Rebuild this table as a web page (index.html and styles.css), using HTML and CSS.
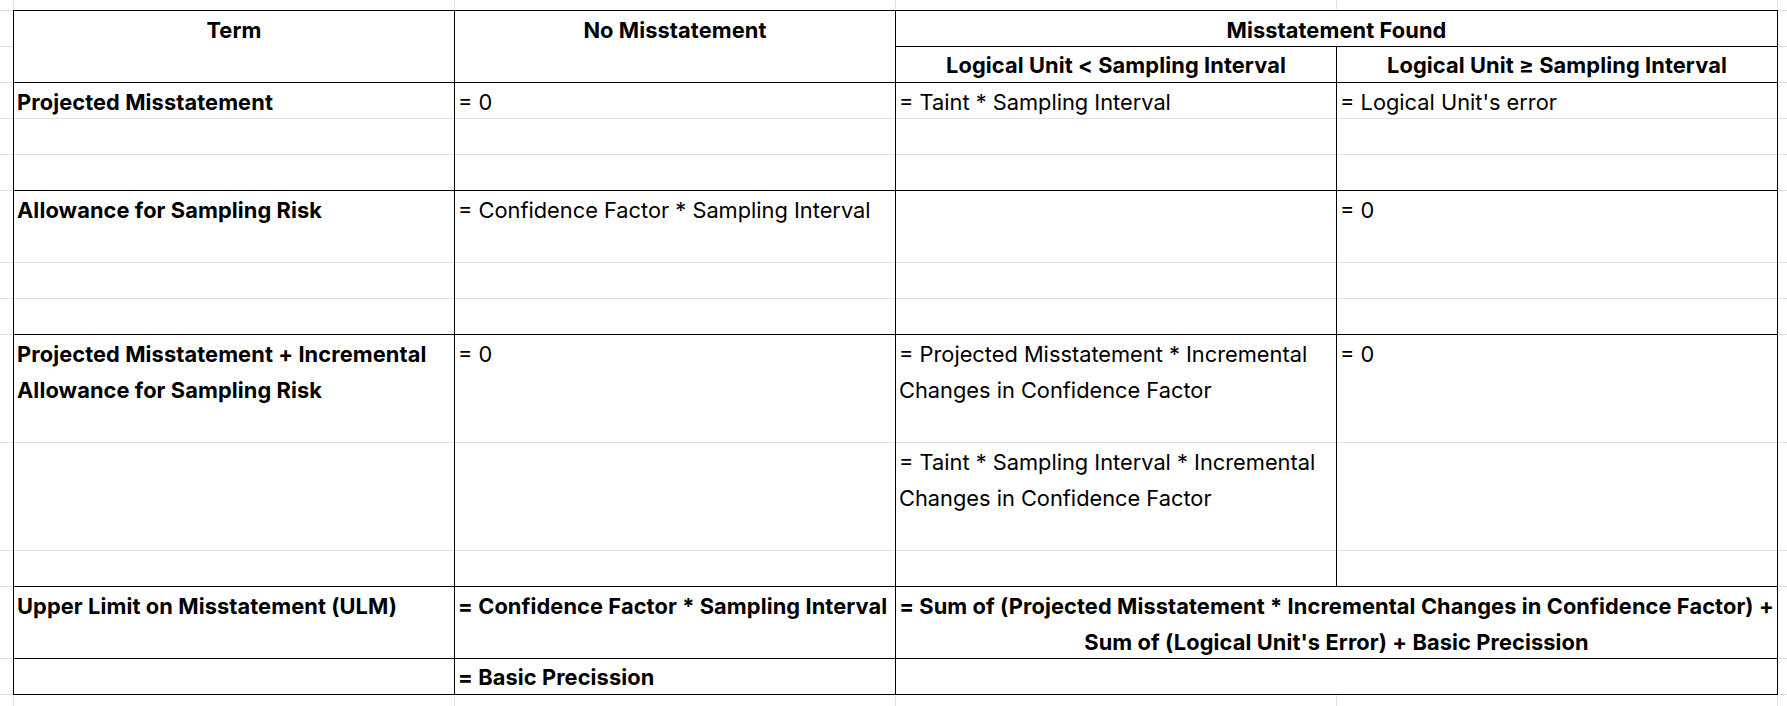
FILE: index.html
```html
<!DOCTYPE html>
<html lang="en">
<head>
<meta charset="utf-8">
<title>Misstatement terms</title>
<link rel="stylesheet" href="styles.css">
</head>
<body>
<div class="sheet">
  <div class="cell merged hd c1 rh">Term</div>
  <div class="cell merged hd c2 rh">No Misstatement</div>
  <div class="cell merged hd c34 rh1">Misstatement Found</div>
  <div class="cell hd c3 rh2">Logical Unit &lt; Sampling Interval</div>
  <div class="cell hd c4 rh2">Logical Unit ≥ Sampling Interval</div>

  <div class="cell b c1 rb">Projected Misstatement</div>
  <div class="cell c2 rb">= 0</div>
  <div class="cell c3 rb">= Taint * Sampling Interval</div>
  <div class="cell c4 rb">= Logical Unit's error</div>

  <div class="cell b c1 rc">Allowance for Sampling Risk</div>
  <div class="cell c2 rc">= Confidence Factor * Sampling Interval</div>
  <div class="cell c3 rc"></div>
  <div class="cell c4 rc">= 0</div>

  <div class="cell b c1 rd">Projected Misstatement + Incremental<br>Allowance for Sampling Risk</div>
  <div class="cell c2 rd">= 0</div>
  <div class="cell c3 rd">
    <p class="para">= Projected Misstatement * Incremental<br>Changes in Confidence Factor</p>
    <p class="para">= Taint * Sampling Interval * Incremental<br>Changes in Confidence Factor</p>
  </div>
  <div class="cell c4 rd">= 0</div>

  <div class="cell b c1 re">Upper Limit on Misstatement (ULM)</div>
  <div class="cell b c2 re">= Confidence Factor * Sampling Interval</div>
  <div class="cell merged b center c34 re">= Sum of (Projected Misstatement * Incremental Changes in Confidence Factor) +<br>Sum of (Logical Unit's Error) + Basic Precission</div>

  <div class="cell c1 rf"></div>
  <div class="cell b c2 rf">= Basic Precission</div>
  <div class="cell merged c34 rf"></div>
</div>
</body>
</html>
```
FILE: styles.css
```css
html, body {
  margin: 0;
  padding: 0;
  background: #fff;
}

body {
  font-family: "Inter", "Noto Sans", sans-serif;
  font-size: 21.8px;
  color: #000;
}

.sheet {
  --grid: #e1e1e1;
  display: grid;
  grid-template-columns: 13px repeat(4, 440px) 1fr;
  grid-template-rows: 10px 35px 35px 35px 35px 35px 71px 35px 35px 107px 107px 35px 71px 35px 1fr;
  gap: 1px;
  height: 706px;
  overflow: hidden;
  background-color: #fff;
  background-image:
    linear-gradient(var(--grid), var(--grid)),
    linear-gradient(var(--grid), var(--grid)),
    linear-gradient(var(--grid), var(--grid)),
    linear-gradient(var(--grid), var(--grid)),
    linear-gradient(var(--grid), var(--grid)),
    linear-gradient(var(--grid), var(--grid)),
    linear-gradient(var(--grid), var(--grid)),
    linear-gradient(var(--grid), var(--grid)),
    linear-gradient(var(--grid), var(--grid)),
    linear-gradient(var(--grid), var(--grid)),
    linear-gradient(var(--grid), var(--grid)),
    linear-gradient(var(--grid), var(--grid)),
    linear-gradient(var(--grid), var(--grid)),
    linear-gradient(var(--grid), var(--grid)),
    linear-gradient(var(--grid), var(--grid)),
    linear-gradient(var(--grid), var(--grid)),
    linear-gradient(var(--grid), var(--grid)),
    linear-gradient(var(--grid), var(--grid)),
    linear-gradient(var(--grid), var(--grid));
  background-repeat: no-repeat;
  background-size:
    100% 1px, 100% 1px, 100% 1px, 100% 1px, 100% 1px, 100% 1px, 100% 1px,
    100% 1px, 100% 1px, 100% 1px, 100% 1px, 100% 1px, 100% 1px, 100% 1px,
    1px 100%, 1px 100%, 1px 100%, 1px 100%, 1px 100%;
  background-position:
    0 10px, 0 46px, 0 82px, 0 118px, 0 154px, 0 190px, 0 262px,
    0 298px, 0 334px, 0 442px, 0 550px, 0 586px, 0 658px, 0 694px,
    13px 0, 454px 0, 895px 0, 1336px 0, 1777px 0;
}

.cell {
  outline: 1px solid #000;
  padding: 1px 3px 0;
  line-height: 36px;
  white-space: nowrap;
  overflow: visible;
  min-width: 0;
}

.merged {
  background: #fff;
}

.hd {
  font-weight: 700;
  text-align: center;
  letter-spacing: 0.1px;
}

.b {
  font-weight: 700;
  letter-spacing: 0.1px;
}

.center {
  text-align: center;
}

.para {
  margin: 0 0 36px;
}

.para:last-child {
  margin-bottom: 0;
}

/* columns */
.c1 { grid-column: 2; }
.c2 { grid-column: 3; }
.c3 { grid-column: 4; }
.c4 { grid-column: 5; }
.c34 { grid-column: 4 / 6; }

/* row groups */
.rh  { grid-row: 2 / 4; }
.rh1 { grid-row: 2; }
.rh2 { grid-row: 3; padding-top: 0; }
.rb  { grid-row: 4 / 7; }
.rc  { grid-row: 7 / 10; }
.rd  { grid-row: 10 / 13; }
.re  { grid-row: 13; }
.rf  { grid-row: 14; padding-top: 0; }
```
